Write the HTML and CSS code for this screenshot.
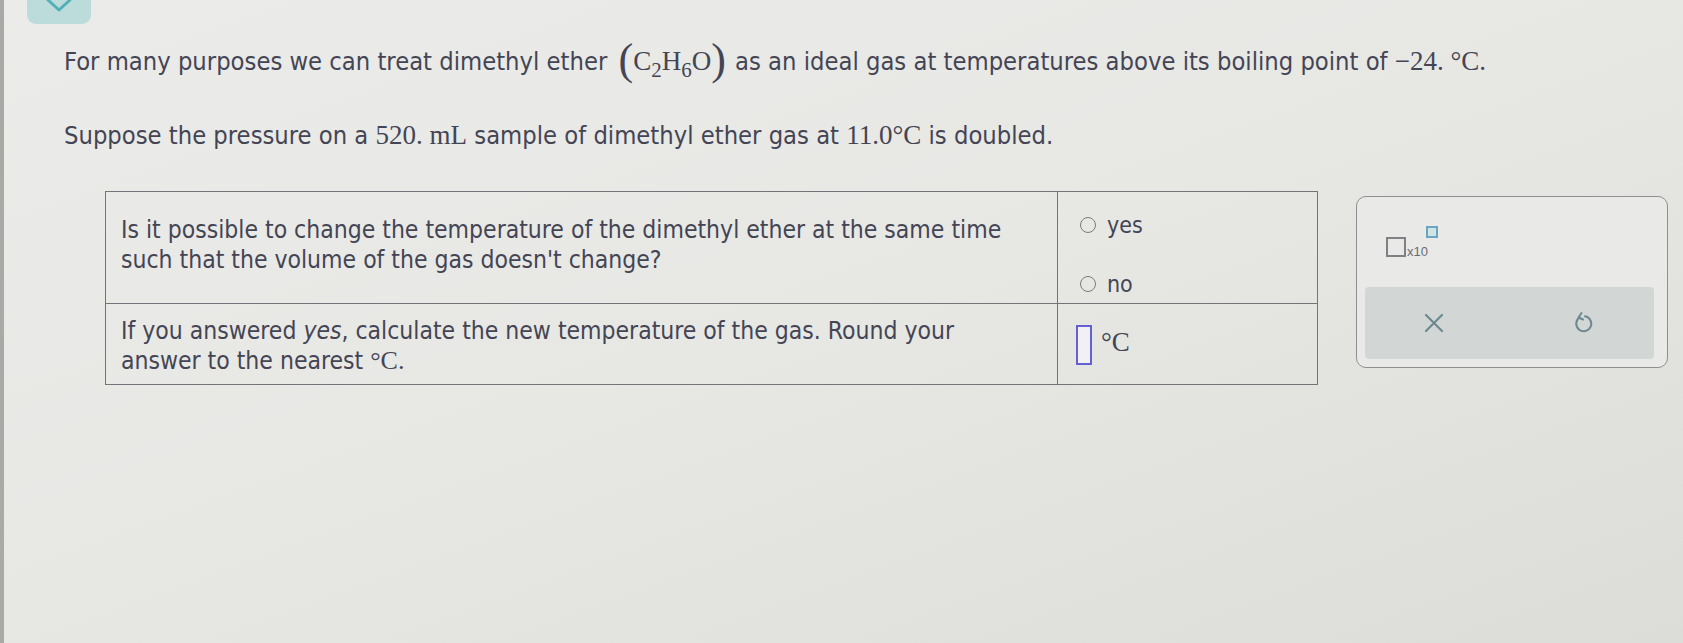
FILE: index.html
```html
<!DOCTYPE html>
<html>
<head>
<meta charset="utf-8">
<link rel="stylesheet" href="styles.css">
</head>
<body>
<div class="page">
  <div class="tab">
    <svg width="28" height="14" viewBox="0 0 28 14"><path d="M3 1 L14 11 L25 1" fill="none" stroke="#52b0b6" stroke-width="3" stroke-linecap="round" stroke-linejoin="round"/></svg>
  </div>
  <p class="line first">For many purposes we can treat dimethyl ether <span class="math formula"><span class="paren">(</span>C<sub>2</sub>H<sub>6</sub>O<span class="paren">)</span></span> as an ideal gas at temperatures above its boiling point of <span class="math">−24. °C.</span></p>
  <p class="line second">Suppose the pressure on a <span class="math">520. mL</span> sample of dimethyl ether gas at <span class="math">11.0°C</span> is doubled.</p>

  <div class="work">
    <div class="qtable">
      <div class="row r1">
        <div class="cell q">Is it possible to change the temperature of the dimethyl ether at the same time such that the volume of the gas doesn't change?</div>
        <div class="cell a radios">
          <label class="radio"><span class="circle"></span>yes</label>
          <label class="radio"><span class="circle"></span>no</label>
        </div>
      </div>
      <div class="row r2">
        <div class="cell q">If you answered <em>yes</em>, calculate the new temperature of the gas. Round your answer to the nearest <span class="math">°C.</span></div>
        <div class="cell a ans">
          <span class="inbox"></span><span class="math unit">°C</span>
        </div>
      </div>
    </div>

    <div class="panel">
      <div class="sci">
        <span class="sq"></span><span class="x10">x10</span><span class="sup"></span>
      </div>
      <div class="bar">
        <svg class="ic" width="22" height="22" viewBox="0 0 22 22"><path d="M3 3 L19 19 M19 3 L3 19" stroke="#6d8990" stroke-width="2.2" stroke-linecap="round"/></svg>
        <svg class="ic" width="22" height="24" viewBox="0 0 22 24"><path d="M7.5 6.5 A7.5 7.5 0 1 0 13 5.3" fill="none" stroke="#6d8990" stroke-width="2" stroke-linecap="round"/><path d="M9.5 2 L6.5 6.5 L11 8.5" fill="none" stroke="#6d8990" stroke-width="2" stroke-linecap="round" stroke-linejoin="round"/></svg>
      </div>
    </div>
  </div>
</div>
</body>
</html>
```

FILE: styles.css
```css
html, body {
  margin: 0;
  padding: 0;
}
body {
  width: 1683px;
  height: 643px;
  overflow: hidden;
  background: linear-gradient(160deg, #ebebe9 0%, #e7e7e4 50%, #dcdcd8 100%);
  font-family: "DejaVu Sans Condensed", "DejaVu Sans", sans-serif;
  color: #444554;
}
.page {
  position: relative;
  height: 643px;
  border-left: 4px solid #a9a9a6;
  box-sizing: border-box;
}
.tab {
  width: 64px;
  height: 24px;
  margin-left: 23px;
  background: #bcdcdb;
  border-radius: 0 0 9px 9px;
  display: flex;
  justify-content: center;
  align-items: flex-start;
}
.tab svg { margin-top: -1px; }
.line {
  margin: 0;
  padding-left: 60px;
  font-size: 25.3px;
  line-height: 30px;
  white-space: nowrap;
}
.first { margin-top: 22px; }
.second { margin-top: 43px; }
.math {
  font-family: "Liberation Serif", "Times New Roman", serif;
  font-size: 27px;
}
.formula { margin: 0 2px 0 4px; }
.math sub {
  font-size: 21px;
  vertical-align: -7px;
  line-height: 0;
}
.paren {
  font-size: 44px;
  font-weight: 300;
  vertical-align: -4px;
  line-height: 0;
}
.work {
  display: flex;
  align-items: flex-start;
  margin-top: 40px;
  padding-left: 101px;
}
.qtable {
  width: 1211px;
  border: 1.5px solid #737378;
  font-size: 24.5px;
  line-height: 30px;
}
.qtable .q .math {
  font-size: 26px;
  line-height: 1;
}
.row {
  display: flex;
}
.r1 { height: 111px; border-bottom: 1.5px solid #737378; }
.r2 { height: 80px; }
.cell.q {
  width: 952px;
  box-sizing: border-box;
  padding: 23px 32px 0 15px;
  border-right: 1.5px solid #737378;
}
.r2 .cell.q { padding-top: 12px; }
.cell.a {
  flex: 1;
  padding-left: 22px;
}
.radios {
  display: flex;
  flex-direction: column;
  gap: 29px;
  padding-top: 18px;
}
.radio {
  display: flex;
  align-items: center;
  gap: 11px;
  font-size: 23px;
}
.circle {
  width: 16px;
  height: 16px;
  border: 1.5px solid #7b7b80;
  border-radius: 50%;
  box-sizing: border-box;
}
.cell.ans {
  display: flex;
  align-items: center;
  gap: 9px;
  padding-top: 2px;
  padding-left: 18px;
}
.inbox {
  width: 16px;
  height: 40px;
  border: 2px solid #6660d6;
  box-sizing: border-box;
  background: #f1f1f3;
}
.unit { font-size: 27px; margin-top: -6px; }
.panel {
  width: 312px;
  height: 172px;
  margin-left: 38px;
  margin-top: 5px;
  border: 1.5px solid #8f8f92;
  border-radius: 10px;
  box-sizing: border-box;
  padding: 0 13px 8px 8px;
  display: flex;
  flex-direction: column;
  background: #e9e9e7;
}
.sci {
  height: 90px;
  display: flex;
  align-items: flex-end;
  padding-left: 21px;
}
.sq {
  width: 20px;
  height: 20px;
  border: 2px solid #808084;
  box-sizing: border-box;
  margin-bottom: 30px;
}
.x10 {
  font-family: "Liberation Sans", Arial, sans-serif;
  font-size: 13px;
  color: #6a6b72;
  margin-bottom: 28px;
  margin-left: 1px;
}
.sup {
  width: 12px;
  height: 12px;
  border: 2px solid #6da4bf;
  background: #cfe6e4;
  box-sizing: border-box;
  margin-bottom: 49px;
  margin-left: -2px;
}
.bar {
  flex: 1;
  background: #d2d7d6;
  border-radius: 4px;
  display: flex;
  align-items: center;
  justify-content: space-between;
  padding: 0 60px 0 58px;
}
.ic { display: block; }
```
